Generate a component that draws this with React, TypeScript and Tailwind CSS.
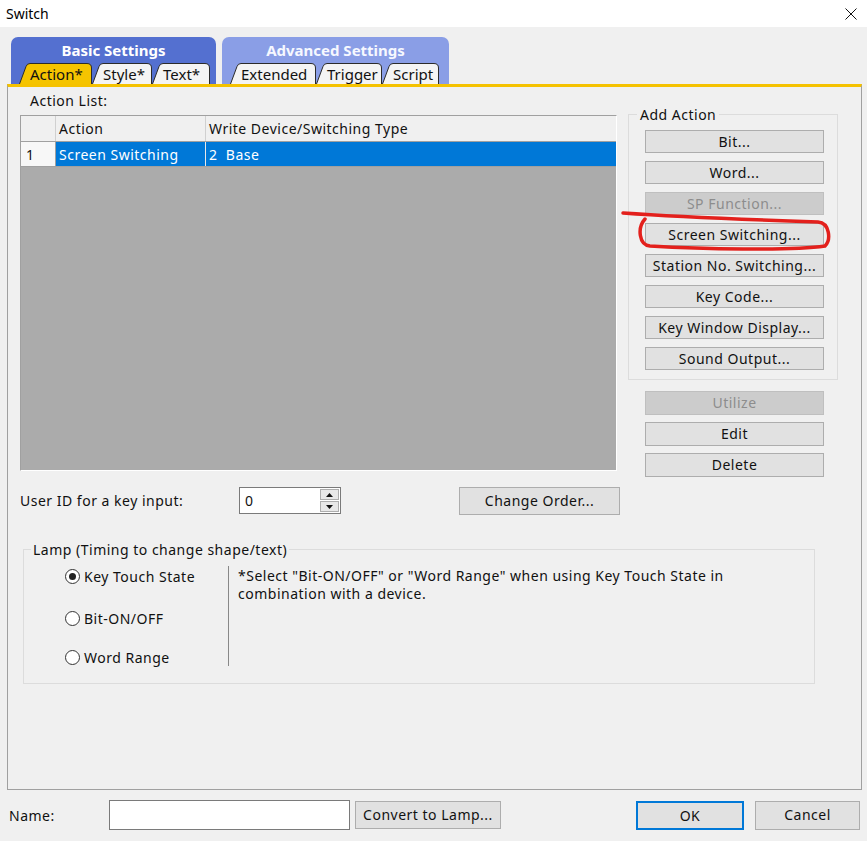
import React from 'react';

const font = "font-['Noto_Sans','Liberation_Sans',sans-serif]";

function SubTab({ label, width, active }: { label: string; width: number; active?: boolean }) {
    const w = width;
    const d = `M0.5,21 L7,3.5 Q8,0.5 11,0.5 L${w - 5},0.5 Q${w - 0.5},0.5 ${w - 0.5},5 L${w - 0.5},21`;
    return (
        <div className="relative h-[21px] shrink-0" style={{ width: w }}>
            <svg className="absolute inset-0" width={w} height={21}>
                <path d={d} fill={active ? '#f5c400' : '#f4f4f4'} stroke="#2b2b2b" strokeWidth={1} />
            </svg>
            <div className="relative flex h-full items-center pl-[11px] pt-[1px] text-[15px] leading-none tracking-normal text-[#111]">
                {label}
            </div>
        </div>
    );
}

function Btn({ children, disabled, className = '' }: { children: React.ReactNode; disabled?: boolean; className?: string }) {
    return (
        <div
            className={`flex shrink-0 items-center justify-center border text-[14px] leading-none ${
                disabled
                    ? 'border-[#bfbfbf] bg-[#cccccc] text-[#8d8d8d]'
                    : 'border-[#adadad] bg-[#e1e1e1] text-[#111]'
            } ${className}`}
        >
            {children}
        </div>
    );
}

function Radio({ label, checked }: { label: string; checked?: boolean }) {
    return (
        <div className="flex h-[20px] items-center">
            <div className="flex h-[15px] w-[15px] items-center justify-center rounded-full border border-[#333] bg-white">
                {checked && <div className="h-[7px] w-[7px] rounded-full bg-[#222]" />}
            </div>
            <span className="ml-[4px] text-[14px] text-[#111]">{label}</span>
        </div>
    );
}

export default function App() {
    const addActions = [
        { label: 'Bit...' },
        { label: 'Word...' },
        { label: 'SP Function...', disabled: true },
        { label: 'Screen Switching...' },
        { label: 'Station No. Switching...' },
        { label: 'Key Code...' },
        { label: 'Key Window Display...' },
        { label: 'Sound Output...' },
    ];

    return (
        <div className={`relative flex h-[841px] w-[867px] flex-col overflow-hidden bg-[#f0f0f0] tracking-[0.5px] ${font}`}>
            {/* title bar */}
            <div className="flex h-[27px] shrink-0 items-center justify-between bg-white pl-[6px] pr-[10px]">
                <span className="text-[14px] tracking-normal text-black">Switch</span>
                <svg width="12" height="12" viewBox="0 0 12 12">
                    <path d="M0.5,0.5 L11.5,11.5 M11.5,0.5 L0.5,11.5" stroke="#111" strokeWidth="1" />
                </svg>
            </div>

            {/* tab groups */}
            <div className="mt-[10px] flex h-[47px] shrink-0 gap-[6px] pl-[11px] tracking-normal">
                <div className="flex w-[205px] flex-col rounded-t-[7px] bg-[#5470d0]">
                    <div className="flex h-[26px] items-center justify-center text-[15px] font-bold text-white">
                        Basic Settings
                    </div>
                    <div className="flex pl-[8px]">
                        <SubTab label="Action*" width={73} active />
                        <SubTab label="Style*" width={60} />
                        <SubTab label="Text*" width={58} />
                    </div>
                </div>
                <div className="flex w-[227px] flex-col rounded-t-[7px] bg-[#8a9ee6]">
                    <div className="flex h-[26px] items-center justify-center text-[15px] font-bold text-[#f6f8ff]">
                        Advanced Settings
                    </div>
                    <div className="flex pl-[8px]">
                        <SubTab label="Extended" width={86} />
                        <SubTab label="Trigger" width={66} />
                        <SubTab label="Script" width={57} />
                    </div>
                </div>
            </div>

            {/* panel */}
            <div className="ml-[7px] h-[706px] w-[855px] shrink-0 border-x border-b border-t-[3px] border-[#a0a0a0] border-t-[#f5c200] pl-[12px]">
                <div className="flex">
                    <div className="flex w-[597px] shrink-0 flex-col">
                        <div className="h-[28px] pl-[10px] pt-[4px] text-[14px] leading-[19px] text-[#111]">Action List:</div>
                        <div className="flex h-[356px] flex-col border border-b-white border-l-[#a0a0a0] border-r-white border-t-[#a0a0a0] bg-[#ababab]">
                            <div className="flex h-[26px] border-b border-[#a0a0a0] bg-[#f0f0f0] text-[14px] text-[#111]">
                                <div className="w-[35px] border-r border-[#d0d0d0]" />
                                <div className="flex w-[150px] items-center border-r border-[#d0d0d0] pl-[3px]">Action</div>
                                <div className="flex flex-1 items-center pl-[3px]">Write Device/Switching Type</div>
                            </div>
                            <div className="flex h-[25px] border-b border-[#a0a0a0] text-[14px]">
                                <div className="flex w-[35px] items-center border-r border-[#a0a0a0] bg-[#f7f7f7] pl-[5px] text-[#111]">1</div>
                                <div className="flex w-[150px] items-center border-r border-[#e8e8e8] bg-[#0078d7] pl-[3px] text-white">
                                    Screen Switching
                                </div>
                                <div className="flex flex-1 items-center bg-[#0078d7] pl-[3px] text-white">2&nbsp;&nbsp;Base</div>
                            </div>
                        </div>
                        <div className="mt-[15px] flex h-[29px] items-center">
                            <div className="w-[219px] shrink-0 text-[14px] text-[#111]">User ID for a key input:</div>
                            <div className="flex h-[27px] w-[102px] shrink-0 border border-[#7a7a7a] bg-white">
                                <div className="flex flex-1 items-center pl-[5px] text-[14px] text-[#111]">0</div>
                                <div className="flex w-[20px] flex-col justify-center gap-[1px] py-[1px] pr-[1px]">
                                    <div className="flex h-[11px] items-center justify-center border border-[#adadad] bg-[#e8e8e8]">
                                        <svg width="7" height="4" viewBox="0 0 7 4"><path d="M0,4 L3.5,0 L7,4 Z" fill="#111" /></svg>
                                    </div>
                                    <div className="flex h-[11px] items-center justify-center border border-[#adadad] bg-[#e8e8e8]">
                                        <svg width="7" height="4" viewBox="0 0 7 4"><path d="M0,0 L3.5,4 L7,0 Z" fill="#111" /></svg>
                                    </div>
                                </div>
                            </div>
                            <Btn className="ml-[118px] h-[28px] w-[161px]">Change Order...</Btn>
                        </div>
                    </div>

                    <div className="ml-[11px] flex w-[210px] shrink-0 flex-col">
                        <fieldset className="mt-[18px] border border-[#dcdcdc] pb-[9px]">
                            <legend className="ml-[8px] px-[3px] text-[14px] leading-[19px] text-[#111]">Add Action</legend>
                            <div className="flex flex-col gap-[8px] pl-[16px] pt-[6px]">
                                {addActions.map((a) => (
                                    <Btn key={a.label} disabled={a.disabled} className="h-[23px] w-[179px]">
                                        {a.label}
                                    </Btn>
                                ))}
                            </div>
                        </fieldset>
                        <div className="mt-[11px] flex flex-col gap-[7px] pl-[17px]">
                            <Btn disabled className="h-[24px] w-[179px]">Utilize</Btn>
                            <Btn className="h-[24px] w-[179px]">Edit</Btn>
                            <Btn className="h-[24px] w-[179px]">Delete</Btn>
                        </div>
                    </div>
                </div>

                <fieldset className="ml-[3px] mt-[25px] w-[792px] border border-[#dcdcdc] pb-[17px]">
                    <legend className="ml-[7px] px-[2px] text-[14px] leading-[19px] text-[#111]">
                        Lamp (Timing to change shape/text)
                    </legend>
                    <div className="flex pt-[7px]">
                        <div className="flex h-[100px] w-[205px] flex-col border-r border-[#888] pl-[41px]">
                            <Radio label="Key Touch State" checked />
                            <div className="mt-[22px]">
                                <Radio label="Bit-ON/OFF" />
                            </div>
                            <div className="mt-[19px]">
                                <Radio label="Word Range" />
                            </div>
                        </div>
                        <div className="pl-[9px] pt-[1px] text-[14px] leading-[18px] text-[#111]">
                            *Select "Bit-ON/OFF" or "Word Range" when using Key Touch State in
                            <br />
                            combination with a device.
                        </div>
                    </div>
                </fieldset>
            </div>

            {/* bottom bar */}
            <div className="mt-[10px] flex h-[30px] shrink-0 items-center pl-[9px]">
                <div className="w-[100px] shrink-0 text-[14px] text-[#111]">Name:</div>
                <div className="h-[30px] w-[241px] shrink-0 border border-[#7a7a7a] bg-white" />
                <Btn className="ml-[5px] h-[28px] w-[146px]">Convert to Lamp...</Btn>
                <div className="ml-[135px] flex h-[29px] w-[108px] shrink-0 items-center justify-center border-2 border-[#0078d7] bg-[#e1e1e1] text-[14px] text-[#111]">
                    OK
                </div>
                <Btn className="ml-[11px] h-[29px] w-[105px]">Cancel</Btn>
            </div>

            {/* red hand-drawn annotation */}
            <svg className="pointer-events-none absolute left-0 top-0" width="867" height="841">
                <path
                    d="M623,213 C680,217 760,220 818,222 C830,223 831,240 825,246 C790,251 700,249 650,246 C639,245 637,228 645,219"
                    fill="none"
                    stroke="#e3201c"
                    strokeWidth="3.5"
                    strokeLinecap="round"
                />
            </svg>
        </div>
    );
}
